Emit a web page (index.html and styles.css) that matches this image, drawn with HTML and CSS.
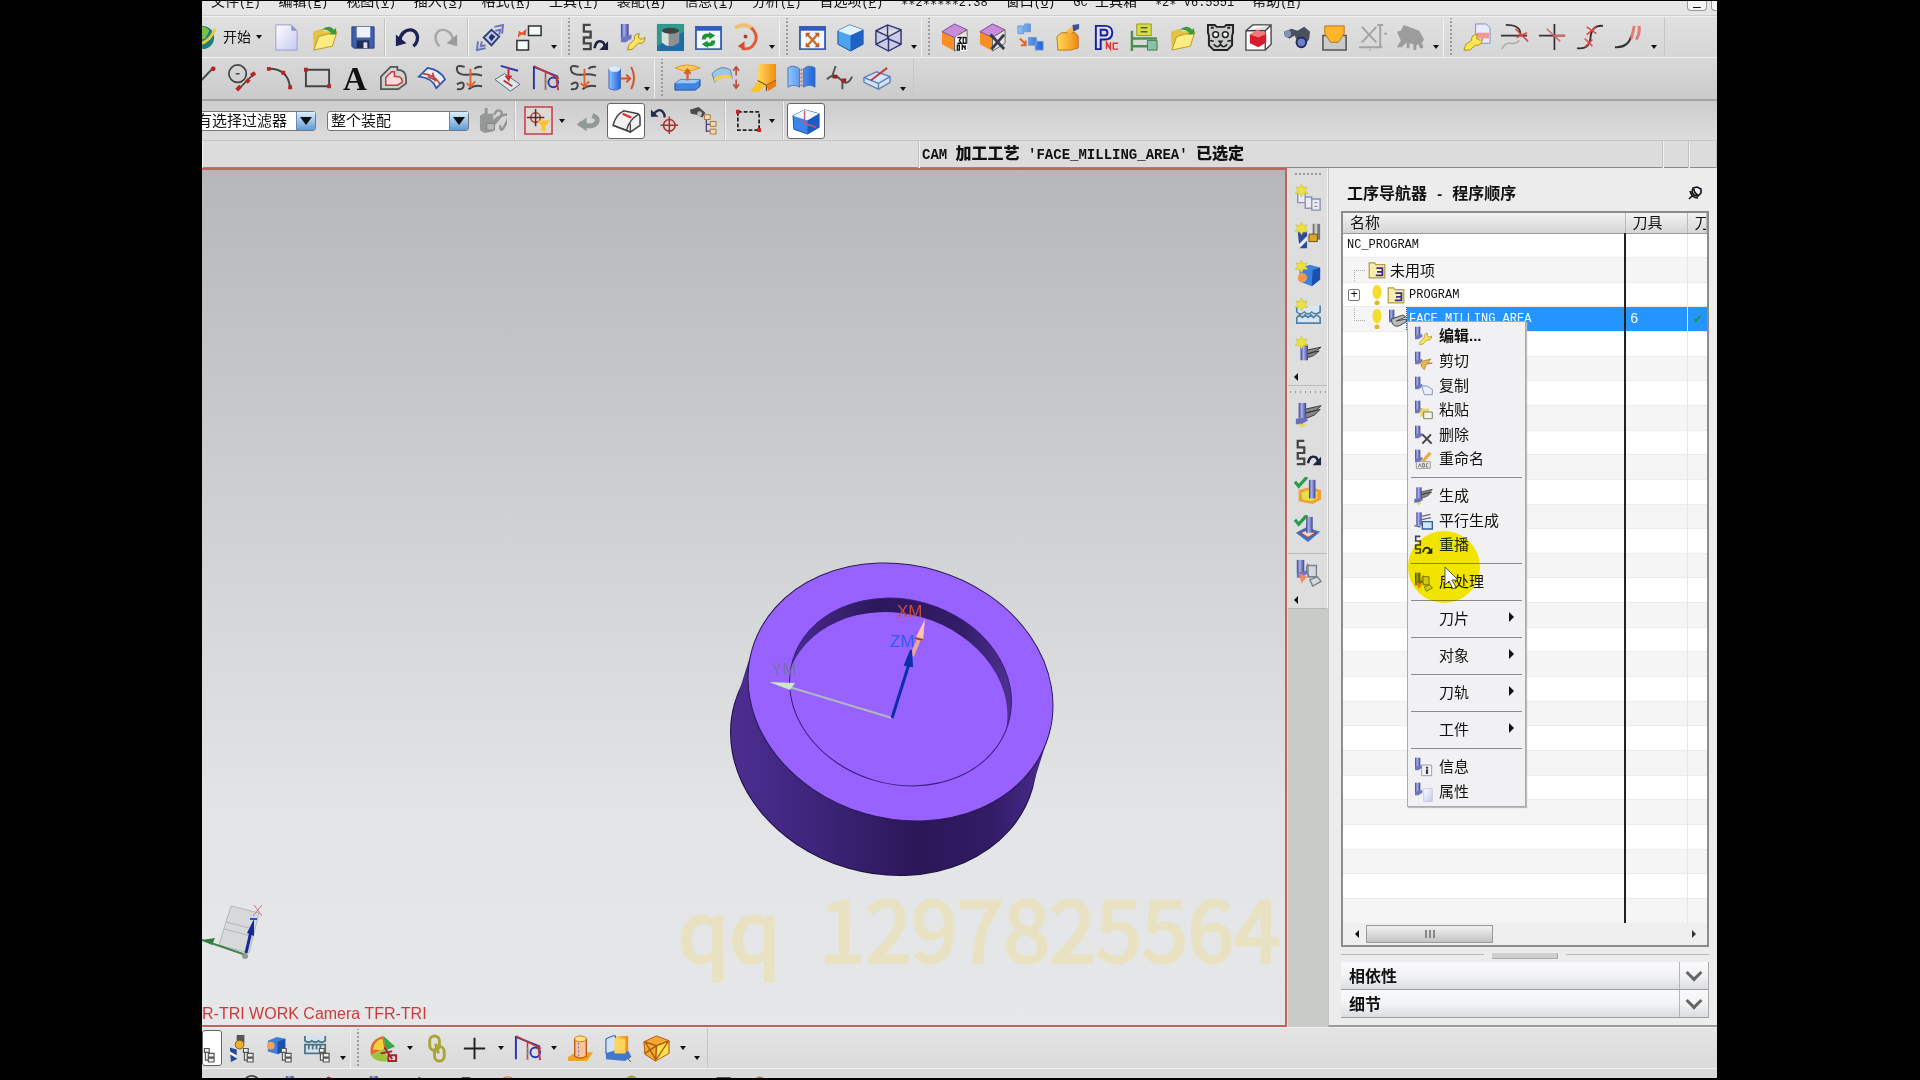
FILE: index.html
```
<!DOCTYPE html>
<html lang="zh-CN">

<head>
    <meta charset="utf-8">
    <title>工序导航器</title>
    <link rel="stylesheet" href="styles.css">
</head>

<body>
    <!-- 图标库 -->
    <svg class="defs" width="0" height="0" aria-hidden="true">
        <defs>
            <linearGradient id="gBlue" x1="0" x2="1"><stop offset="0" stop-color="#8fc4ff"/><stop offset="1" stop-color="#1f62d8"/></linearGradient>
            <linearGradient id="gMill" x1="0" x2="1"><stop offset="0" stop-color="#3a3f96"/><stop offset=".4" stop-color="#a9b0ee"/><stop offset="1" stop-color="#3d4293"/></linearGradient>
            <linearGradient id="gGold" x1="0" x2="1"><stop offset="0" stop-color="#ffd95a"/><stop offset="1" stop-color="#f08a12"/></linearGradient>
            <linearGradient id="gPaper" x1="0" y1="0" x2="1" y2="1"><stop offset="0" stop-color="#fff"/><stop offset="1" stop-color="#c5c8f0"/></linearGradient>
            <linearGradient id="gSide" gradientUnits="userSpaceOnUse" x1="31" x2="348" y1="0" y2="0"><stop offset="0" stop-color="#4c2e92"/><stop offset=".28" stop-color="#3d2479"/><stop offset=".6" stop-color="#2a1757"/><stop offset=".82" stop-color="#321c66"/><stop offset="1" stop-color="#4a2c90"/></linearGradient>
            <linearGradient id="gWall" x1="0" x2="1"><stop offset="0" stop-color="#4e2f97"/><stop offset=".4" stop-color="#2c185b"/><stop offset=".75" stop-color="#321d68"/><stop offset="1" stop-color="#553399"/></linearGradient>
        </defs>
        <symbol id="i-globe" viewBox="0 0 30 30"><circle cx="14" cy="15" r="12" fill="#1d7f7c"/><path d="M8 6q8-5 13 2l-4 8-9 2z" fill="#7cc04a"/><path d="M2 22Q20 24 27 6" fill="none" stroke="#f0c83c" stroke-width="3"/></symbol>
        <symbol id="i-new" viewBox="0 0 30 30"><path d="M4 2h16l6 6v20H4z" fill="url(#gPaper)" stroke="#9a9cd0"/><path d="M20 2v6h6z" fill="#8f93cc"/></symbol>
        <symbol id="i-open" viewBox="0 0 30 30"><path d="M3 9l9-3 3 3 9-2v17L4 28z" fill="#e4c340"/><path d="M4 28l5-14 19-5-5 15z" fill="#ffec84" stroke="#b99b28"/><path d="M12 7q8-6 13 0l2-2v7h-7l2-2q-4-4-10-3z" fill="#3c9a3c"/></symbol>
        <symbol id="i-save" viewBox="0 0 30 30"><path d="M4 4h23v22H6l-2-2z" fill="#3d5fae" stroke="#2c427f"/><path d="M9 4h14v11H9z" fill="#eef3fb"/><path d="M9 18h13v8H9z" fill="#222b50"/><path d="M16 20h4v6h-4z" fill="#dde"/></symbol>
        <symbol id="i-undo" viewBox="0 0 30 30"><path d="M7 18C9 3 28 4 25 18q-1 4-4 6" fill="none" stroke="#1d2155" stroke-width="3.5"/><path d="M3 12v12l11-3z" fill="#1d2155"/></symbol>
        <symbol id="i-redo" viewBox="0 0 30 30"><path d="M23 18C21 3 2 4 5 18q1 4 4 6" fill="none" stroke="#a9a9a9" stroke-width="2.5"/><path d="M27 12v12l-11-3z" fill="#9c9c9c"/></symbol>
        <symbol id="i-orient" viewBox="0 0 30 30"><path d="M8 15l8-8 8 7-8 9z" fill="#c3cdf5" stroke="#39407e" stroke-width="2"/><path d="M13 15l3-4 4 3-4 5z" fill="#29306b"/><path d="M19 4l9-2-1 9M20 8l5-1-1 5M2 19l-1 9 9-2M6 19l-1 5 5-1" fill="none" stroke="#6a74b8" stroke-width="2"/></symbol>
        <symbol id="i-assign" viewBox="0 0 30 30"><path d="M15 3h13v10H15zM3 18h12v10H3z" fill="#f2fafa" stroke="#333" stroke-width="1.6"/><path d="M4 15l1-7 3 2 5-4-1 7-4-1z" fill="#e0562c"/></symbol>
        <symbol id="i-replay" viewBox="0 0 30 30"><path d="M11 2H4v7h7v6H4M4 15v0M11 15H4v6h7v6H3" fill="none" stroke="#444" stroke-width="2.4"/><path d="M15 26q2-10 9-6l2 4" fill="none" stroke="#1d2340" stroke-width="2.6"/><path d="M29 19v9h-9z" fill="#1d2340"/></symbol>
        <symbol id="i-mill" viewBox="0 0 30 30"><path d="M3 1h8v14H3z" fill="url(#gMill)"/><path d="M3 15l11-3v4l-6 4H3z" fill="#6d75c4"/></symbol>
        <symbol id="i-edit" viewBox="0 0 30 30"><use href="#i-mill"/><path d="M10 28l1-5 6-6q-1-6 5-6l-1 4 3 2 4-2q0 7-7 6l-6 6z" fill="#ffe35a" stroke="#a68a22"/></symbol>
        <symbol id="i-verify" viewBox="0 0 30 30"><path d="M1 1h28v28H1z" fill="#1c6ea4"/><path d="M1 1h28v8L1 24z" fill="#2e9a8c"/><path d="M6 8v12q9 8 18 0V8z" fill="#8b9392"/><path d="M6 8v12q3 3 7 4V9z" fill="#dadfdc"/><ellipse cx="15" cy="8" rx="9" ry="3" fill="#3b4544"/></symbol>
        <symbol id="i-window" viewBox="0 0 30 30"><path d="M2 4h26v23H2z" fill="#f5f9ff" stroke="#3d62b5" stroke-width="2"/><path d="M2 4h26v4H2z" fill="#2e5cc0"/></symbol>
        <symbol id="i-refresh" viewBox="0 0 30 30"><use href="#i-window"/><path d="M8 17q0-7 8-6l-1-2 7 4-6 4v-2q-4-1-4 2zM22 18q0 7-8 6l1 2-7-4 6-4v2q4 1 4-2z" fill="#1d9436"/></symbol>
        <symbol id="i-fit" viewBox="0 0 30 30"><use href="#i-window"/><path d="M10 12l10 11M20 12L10 23" stroke="#c87236" stroke-width="2.5"/><path d="M8 10h5l-5 5zM22 10v5l-5-5zM8 25v-5l5 5zM22 25h-5l5-5z" fill="#c05a20"/></symbol>
        <symbol id="i-rotate" viewBox="0 0 30 30"><path d="M3 5q12-6 19 2" fill="none" stroke="#eec074" stroke-width="4"/><path d="M20 5q10 10 0 20-4 3-10 1" fill="none" stroke="#dc5a35" stroke-width="3"/><path d="M6 24l7-5v9z" fill="#d84a30"/><circle cx="14" cy="14" r="2" fill="#a8442a"/></symbol>
        <symbol id="i-shade" viewBox="0 0 30 30"><path d="M2 8l12-6 14 5v15l-13 7-13-7z" fill="#4ba3ee" stroke="#1c4c92"/><path d="M2 8l12-6 14 5-13 6z" fill="#dff2ff"/><path d="M15 13l13-6v15l-13 7z" fill="#1e62c4"/></symbol>
        <symbol id="i-wire" viewBox="0 0 30 30"><path d="M2 8l12-6 14 5v15l-13 7-13-7zM2 8l13 6 13-7M15 14v15M2 22l12-6 14 6M14 2v14" fill="#bcc3ef" fill-opacity=".6" stroke="#30366f" stroke-width="1.5"/></symbol>
        <symbol id="i-pcube" viewBox="0 0 30 30"><path d="M2 9l13 6v14L2 22z" fill="#f98f22"/><path d="M2 9l13-8 13 6-13 8z" fill="#c98cdd" stroke="#7d4a96"/><path d="M15 15l13-8v14l-13 8z" fill="#efe4dc" stroke="#666"/></symbol>
        <symbol id="i-cubelist" viewBox="0 0 30 30"><use href="#i-pcube"/><path d="M17 13h11v16H17z" fill="#fff"/><path d="M18 15h4l-2 3 2 3h-4M24 15h3v6h-3zM18 23h2v5h-2zM23 28v-5l3 3v-3 5" fill="none" stroke="#111" stroke-width="1.4"/></symbol>
        <symbol id="i-cubex" viewBox="0 0 30 30"><use href="#i-pcube"/><path d="M13 12l14 15M27 12L14 27" stroke="#333c55" stroke-width="3"/></symbol>
        <symbol id="i-copyobj" viewBox="0 0 30 30"><path d="M2 3h6v8H2zM9 1h6v8H9zM13 15h8v8h-8zM20 19h8v9h-8z" fill="url(#gBlue)" stroke="#6a9cca"/><path d="M4 16l6 6M10 18v5H5" fill="none" stroke="#e0662c" stroke-width="2"/></symbol>
        <symbol id="i-bottle" viewBox="0 0 30 30"><path d="M3 14l5-4h14l3 4v12l-8 2H4z" fill="url(#gGold)" stroke="#c0741a"/><path d="M12 9l6-5 3 4-4 3z" fill="#ffb94a"/><path d="M19 2l7-1v5l-6 3z" fill="#42508e"/></symbol>
        <symbol id="i-pnc" viewBox="0 0 30 30"><path d="M4 27V3h9q8 0 8 7t-8 7h-4v10zM9 7v6h4q3 0 3-3t-3-3z" fill="#dfe2f6" stroke="#16209a" stroke-width="2"/><path d="M15 27v-7l4 7v-7M27 21h-5v6h5" fill="none" stroke="#d33" stroke-width="1.5"/></symbol>
        <symbol id="i-steps" viewBox="0 0 30 30"><path d="M7 1h15v12H7z" fill="#d8df3a" stroke="#93982c"/><path d="M11 5h7M11 9h7" stroke="#555" stroke-width="1.5"/><path d="M2 8v21M2 16h26M2 24h26" stroke="#4d8f52" stroke-width="2.5"/><path d="M18 18h10v10H18z" fill="#8cc0a4" stroke="#3b8054"/></symbol>
        <symbol id="i-bear" viewBox="0 0 30 30"><path d="M2 2h7l2 2h8l2-2h7v8l-1 3v10l-5 5H8l-5-5V13l-1-3z" fill="#c9cbcb" stroke="#222" stroke-width="2"/><path d="M5 5h3M22 5h3" stroke="#222" stroke-width="2"/><circle cx="10" cy="12" r="3" fill="#fff" stroke="#222" stroke-width="1.6"/><circle cx="20" cy="12" r="3" fill="#fff" stroke="#222" stroke-width="1.6"/><path d="M12 18h6l-3 4z" fill="#222"/><path d="M8 22q4 5 7 0 3 5 7 0M4 18l4 1M26 18l-4 1" fill="none" stroke="#222" stroke-width="1.6"/></symbol>
        <symbol id="i-redcube" viewBox="0 0 30 30"><path d="M2 8l7-6h19v20l-6 6H2zM2 8h20l6-6M22 8v20" fill="#fff" stroke="#444" stroke-width="1.4"/><path d="M6 12l8-5 9 4v9l-8 5-9-4z" fill="#d81c2c"/><path d="M6 12l8-5 9 4-8 4z" fill="#f47a80"/></symbol>
        <symbol id="i-binoc" viewBox="0 0 30 30"><path d="M2 9l8-3 6 2 7-4 6 5-1 8-5 6-7-4-3-6-5 3-5-2z" fill="#4b4f5e"/><circle cx="6" cy="11" r="3.5" fill="#8791ba"/><circle cx="20" cy="20" r="5" fill="#6f7fd0" stroke="#252b57" stroke-width="2"/></symbol>
        <symbol id="i-mold" viewBox="0 0 30 30"><path d="M3 13h24v15H3z" fill="#c9cbca" stroke="#555" stroke-width="1.6"/><path d="M5 3h20v8l-6 9h-8l-6-9z" fill="#ffb52a" stroke="#b87212"/></symbol>
        <symbol id="i-dim" viewBox="0 0 30 30"><path d="M4 4l15 16M19 4L4 20M23 2v24M20 2h6M1 25h24M27 11h3M12 28h1" stroke="#a2a2a2" stroke-width="2"/></symbol>
        <symbol id="i-beast" viewBox="0 0 30 30"><path d="M1 9l4-1 3-6 16 6 5 9-3 5h2v4h-3l-2-4-2 1v5h-3v-6l-4-1v5h-3v-6l-5 5H1l4-7z" fill="#9c9c9c"/></symbol>
        <symbol id="i-docedit" viewBox="0 0 30 30"><path d="M14 1h11l4 4v16H14z" fill="#e7ebff" stroke="#7d8fd0"/><path d="M15 10h13v6H15z" fill="#f29a9a"/><path d="M2 28l2-6 6-4q-1-6 6-6l-1 4 4 2 2-2q0 8-7 7l-6 5z" fill="#ffe64c" stroke="#a69122"/></symbol>
        <symbol id="i-trim" viewBox="0 0 30 30"><path d="M6 2q16 0 15 10M1 13h27" fill="none" stroke="#333" stroke-width="1.8"/><path d="M2 27q3-7 9-6t9-3" fill="none" stroke="#aaa" stroke-width="1.5"/><path d="M16 6l13 13M28 10l-11 5" stroke="#d44" stroke-width="1.6"/></symbol>
        <symbol id="i-corner" viewBox="0 0 30 30"><path d="M1 13h27M17 1v27" stroke="#333" stroke-width="1.8"/><path d="M9 6l14 13M17 13h11" stroke="#d66" stroke-width="1.6"/></symbol>
        <symbol id="i-divide" viewBox="0 0 30 30"><path d="M1 26q13 2 14-11T28 3" fill="none" stroke="#333" stroke-width="2"/><path d="M11 4l10 7M21 4l-10 8M9 16l8 8M17 17l-8 8" stroke="#d44" stroke-width="1.5"/></symbol>
        <symbol id="i-length" viewBox="0 0 30 30"><path d="M1 25q14 1 17-12" fill="none" stroke="#333" stroke-width="2"/><path d="M18 16l3-13M23 17q4-6 3-14" stroke="#e07a74" stroke-width="3" fill="none"/></symbol>
        <symbol id="i-line" viewBox="0 0 30 30"><path d="M3 27L25 4" stroke="#444" stroke-width="2"/><circle cx="25" cy="5" r="2.5" fill="#b22"/></symbol>
        <symbol id="i-circline" viewBox="0 0 30 30"><circle cx="11" cy="10" r="9" fill="none" stroke="#444" stroke-width="1.8"/><path d="M9 10h4M12 26l15-15" stroke="#444" stroke-width="1.6"/><path d="M10 27l4-4M20 19l3-3M25 12l4-3" stroke="#b22" stroke-width="4"/></symbol>
        <symbol id="i-arc" viewBox="0 0 30 30"><path d="M3 5q20-1 23 19" fill="none" stroke="#444" stroke-width="2"/><path d="M2 3h4v4H2zM17 7h4v4h-4zM24 22h4v4h-4z" fill="#b22"/></symbol>
        <symbol id="i-rect" viewBox="0 0 30 30"><path d="M3 6h24v17H3z" fill="none" stroke="#444" stroke-width="2"/><path d="M1 4h4v4H1zM25 21h4v4h-4z" fill="#b22"/></symbol>
        <symbol id="i-offset" viewBox="0 0 30 30"><path d="M2 26V13L12 3h7v3q9 0 9 9v5l-8 6z" fill="none" stroke="#555" stroke-width="1.8"/><path d="M7 22v-8l6-6h3v5q7-1 8 4v2l-5 3z" fill="#f9dcdc" stroke="#b44" stroke-width="1.6"/></symbol>
        <symbol id="i-surf" viewBox="0 0 30 30"><path d="M2 13l9-9q13 2 18 12l-9 9Q16 14 2 13z" fill="#e9f1f7" stroke="#2d55b5" stroke-width="1.8"/><path d="M6 10q12 1 18 11M11 13l9 4M16 9l3 9" fill="none" stroke="#c0413a" stroke-width="1.8"/></symbol>
        <symbol id="i-curves" viewBox="0 0 30 30"><path d="M10 3q-9-3-8 3t13 5q6-1 13 1M2 21q7-4 7 1t-7 4M14 26q6-5 14-3M20 5q3-3 8-2" fill="none" stroke="#444" stroke-width="2"/><path d="M16 5v18l-4-3M16 23l5-5" stroke="#e0662c" stroke-width="2" fill="none"/></symbol>
        <symbol id="i-plane" viewBox="0 0 30 30"><path d="M2 16l10-6 16 11-10 7z" fill="#dcebea" stroke="#568"/><path d="M8 2l18 5" stroke="#2638b5" stroke-width="2"/><path d="M16 4v12l-3-4M16 16l3-4M11 17l9 6" stroke="#c03030" stroke-width="2" fill="none"/></symbol>
        <symbol id="i-derive" viewBox="0 0 30 30"><path d="M3 26V2M3 3l25 10" stroke="#2537b0" stroke-width="2"/><path d="M3 2l26 13M15 7v20" stroke="#c13a3a" stroke-width="1.6"/><path d="M15 14v14" stroke="#4aa3a0" stroke-width="1.5" stroke-dasharray="3 2"/><circle cx="23" cy="19" r="5" fill="none" stroke="#2537b0" stroke-width="2"/><path d="M26 12l2 15" stroke="#c13a3a" stroke-width="2"/></symbol>
        <symbol id="i-extr" viewBox="0 0 30 30"><path d="M2 5q6-5 12 0v20q-6 4-12 0z" fill="url(#gBlue)" stroke="#4a6ab8"/><ellipse cx="8" cy="5" rx="6" ry="3" fill="#dcecff"/><path d="M14 15h10M20 11l4 4-4 4M25 3q6 11 0 23" fill="none" stroke="#d8502c" stroke-width="2"/></symbol>
        <symbol id="i-pad" viewBox="0 0 30 30"><path d="M2 20l6-4h20v7l-5 4H2z" fill="#3f86e2" stroke="#1f50a0"/><path d="M2 20l6-4h20l-5 4z" fill="#9cc8f8"/><path d="M2 4q13-6 26 0-13 6-26 0z" fill="#ffca5a" stroke="#e0962a"/><path d="M15 7v10M12 10l3-4 3 4" stroke="#d2652c" stroke-width="2.5" fill="none"/></symbol>
        <symbol id="i-sweep" viewBox="0 0 30 30"><path d="M1 10q9-10 19-4l2 9q-11-5-18 4z" fill="#9cc7ea" stroke="#5b82a6"/><path d="M3 15q8-6 18-3l1 4q-11-4-18 3z" fill="#f4d23c"/><path d="M26 3v9M26 16v9M23 7l3-4 3 4M23 21l3 4 3-4" stroke="#b84a33" stroke-width="1.6" fill="none"/></symbol>
        <symbol id="i-chamfer" viewBox="0 0 30 30"><path d="M10 0h18v17l-10 5-9-4z" fill="url(#gGold)"/><path d="M9 18l9 4-8 7H1z" fill="#ffc32a"/><path d="M9 17l9 5 10-5M18 22v6" stroke="#5a3207" fill="none"/><path d="M18 22l10-5v6l-8 5z" fill="#ee7d14"/></symbol>
        <symbol id="i-sew" viewBox="0 0 30 30"><path d="M1 4q6-4 12 1v19q-6-4-12 0zM17 5q6-5 12-1v20q-6-4-12 0z" fill="url(#gBlue)" stroke="#4677b5"/><path d="M15 5v20" stroke="#d76a5a" stroke-width="2" stroke-dasharray="2 2"/></symbol>
        <symbol id="i-spline" viewBox="0 0 30 30"><path d="M2 16q7-8 14 0t12-3M7 14l4-12M18 17v9" fill="none" stroke="#555" stroke-width="2"/><path d="M8 11h5v4H8zM17 15h5v4h-5z" fill="#9c2222"/></symbol>
        <symbol id="i-slab" viewBox="0 0 30 30"><path d="M1 14l13-6 14 5v6l-12 7-15-7z" fill="#d5e3fb" stroke="#6482bc" stroke-width="1.5"/><path d="M1 14l15 6 12-7M16 20v6" fill="none" stroke="#6482bc" stroke-width="1.5"/><path d="M8 17L25 4" stroke="#c0413a" stroke-width="2"/></symbol>
        <symbol id="i-asm" viewBox="0 0 30 30"><path d="M2 10l5-3v-5h3v6h6v18l-9 2-5-3z" fill="#969896"/><path d="M9 18h8v7H9z" fill="#b8bab8" stroke="#7e807e"/><path d="M17 9q2-6 6-4t-2 9-4 4q-2-4 8-8t4 8-6 2" fill="none" stroke="#929492" stroke-width="2.5"/></symbol>
        <symbol id="i-snap" viewBox="0 0 30 30"><path d="M1 1h28v28H1z" fill="#dfd9d6" stroke="#c0424a" stroke-width="1.6"/><circle cx="12" cy="12" r="5" fill="none" stroke="#a8443c" stroke-width="1.6"/><path d="M12 3v18M3 12h18" stroke="#5a2d28" stroke-width="1.6"/><path d="M14 15h13l-5 6v6l-4-2v-4z" fill="#ffc22a"/></symbol>
        <symbol id="i-back" viewBox="0 0 30 30"><path d="M5 18q16 6 19-2 1-4-5-6" fill="none" stroke="#8f9b97" stroke-width="5"/><path d="M13 12v14L3 19z" fill="#8f9b97"/></symbol>
        <symbol id="i-eraser" viewBox="0 0 30 30"><path d="M1 20q3-11 11-15l15 3q2 1 2 4v8l-10 7z" fill="#f1f1f1" stroke="#444" stroke-width="1.6"/><path d="M1 20l14 5q3-11 12-16M15 25l4 2v-9" fill="none" stroke="#444" stroke-width="1.4"/><path d="M11 8l9 4" stroke="#d33" stroke-width="2.5"/></symbol>
        <symbol id="i-target" viewBox="0 0 30 30"><path d="M4 8q7-8 11 1v3" fill="none" stroke="#222850" stroke-width="2.4"/><path d="M1 4v7h8z" fill="#222850"/><circle cx="20" cy="20" r="6" fill="none" stroke="#a8332c" stroke-width="1.6"/><path d="M20 11v18M11 20h18" stroke="#a8332c" stroke-width="1.6"/></symbol>
        <symbol id="i-findtree" viewBox="0 0 30 30"><path d="M2 4l9-3 7 6-3 5-6-3-6-1z" fill="#4b4b4b"/><circle cx="12" cy="8" r="2.5" fill="#bbb"/><path d="M19 13v14M19 19h4M19 26h4" stroke="#547" stroke-width="1.4" fill="none"/><path d="M17 9h6v5h-6zM23 16h6v5h-6zM23 24h6v5h-6z" fill="#f5d9b4" stroke="#a5763b"/></symbol>
        <symbol id="i-marquee" viewBox="0 0 30 30"><path d="M4 6h22v19H4z" fill="none" stroke="#222" stroke-width="1.8" stroke-dasharray="4 2"/><path d="M2 4h4v4H2zM24 23h4v4h-4z" fill="#c22"/></symbol>
        <symbol id="i-bluebox" viewBox="0 0 30 30"><path d="M1 10l12-6 15 4v14l-12 7L2 24z" fill="#3b86e8" stroke="#1c4ea2"/><path d="M1 10l12-6 15 4-12 7z" fill="#eef7ff"/><path d="M16 15l12-7v14l-12 7z" fill="#1f5ac2"/><path d="M13 5v13l12 4" fill="none" stroke="#c25a7a" stroke-width="1.5"/></symbol>
        <symbol id="i-star" viewBox="0 0 30 30"><path d="M8 0l2 4 4-1-2 4 3 3-5 0-2 4-2-4-5 0 3-3-2-4 4 1z" fill="#ece23c" stroke="#c6b83a" stroke-width=".6"/></symbol>
        <symbol id="i-newprog" viewBox="0 0 30 30"><path d="M4 9h8v11H4zM12 14h7v12h-7zM19 16h9v12h-9z" fill="#e8ebf4" stroke="#8b93ad" stroke-width="1.5"/><path d="M22 20h3M22 24h3" stroke="#777"/><use href="#i-star"/></symbol>
        <symbol id="i-newtool" viewBox="0 0 30 30"><path d="M4 11h10v17H6z" fill="#2c4b9c"/><path d="M5 24l9-9v5l-8 8z" fill="#e8edfa"/><path d="M20 2h8v17h-8z" fill="#777"/><path d="M22 2h3v17h-3z" fill="#ccc"/><path d="M16 13h9v8h-9z" fill="#e0a42c" stroke="#6f5212"/><use href="#i-star"/></symbol>
        <symbol id="i-newgeo" viewBox="0 0 30 30"><path d="M6 9l11-4 11 3v13l-9 7-13-5z" fill="#3e80dd"/><path d="M20 11l8-3v13l-9 7z" fill="#1b50ae"/><circle cx="9" cy="19" r="5" fill="#f29a4c"/><use href="#i-star"/></symbol>
        <symbol id="i-newmeth" viewBox="0 0 30 30"><path d="M3 9v6q4 4 8 0 4 4 8 0 4 4 9 0V8M3 21l3-3 3 3 3-3 3 3 3-3 3 3 3-3 4 3v6H3z" fill="#d8e8f2" stroke="#5482a8" stroke-width="1.8"/><use href="#i-star"/></symbol>
        <symbol id="i-newop" viewBox="0 0 30 30"><path d="M14 15l15-3-5 4-12 4 15-4-6 5-12 4z" fill="#888" stroke="#333"/><path d="M7 9h8v17H7z" fill="url(#gMill)"/><use href="#i-star"/></symbol>
        <symbol id="i-gen" viewBox="0 0 30 30"><path d="M11 9l18-4-5 5-12 3 16-4-6 6-10 4z" fill="#888" stroke="#333"/><path d="M5 2h8v17H5z" fill="url(#gMill)"/><path d="M2 19l11-1 2 3-7 4H2z" fill="#6a70b8"/><path d="M5 24l3 5 5-4" fill="#e6d84a"/></symbol>
        <symbol id="i-tick" viewBox="0 0 30 30"><path d="M1 5l4 5L14 0" fill="none" stroke="#2b9c4c" stroke-width="3.5"/></symbol>
        <symbol id="i-check" viewBox="0 0 30 30"><path d="M5 14l12-3 12 3v10l-9 5-15-3z" fill="#f2a034"/><path d="M8 17l9-4 8 3v7l-6 3-10-2z" fill="#e8e04a"/><path d="M16 3h7v20h-7z" fill="url(#gMill)"/><use href="#i-tick"/></symbol>
        <symbol id="i-confirm" viewBox="0 0 30 30"><path d="M2 19l11-6 15 5-13 11z" fill="#4270c6"/><path d="M7 19l7-3 9 3-8 5z" fill="#ecd3cc" stroke="#a33"/><path d="M13 2h7v17h-7z" fill="url(#gMill)"/><use href="#i-tick"/></symbol>
        <symbol id="i-post" viewBox="0 0 30 30"><use href="#i-mill"/><path d="M5 15l9 4-6 7z" fill="#ef8a5a"/><path d="M15 7h9v12h-9zM17 22l8-3 4 5-9 5z" fill="#d5d8df" stroke="#7c808a" stroke-width="1.5"/><path d="M15 5q-4 7 2 15" fill="none" stroke="#7c808a" stroke-width="1.5"/></symbol>
        <symbol id="i-tree" viewBox="0 0 30 30"><path d="M17 15h5v4h-5zM21 20h6v4h-6zM21 25h6v4h-6zM18 19v8h3" fill="#eee" stroke="#555" stroke-width="1.2"/></symbol>
        <symbol id="i-vprog" viewBox="0 0 30 30"><path d="M3 5h9v8H3z" fill="#f2f4fc" stroke="#888"/><use href="#i-tree"/></symbol>
        <symbol id="i-vtool" viewBox="0 0 30 30"><path d="M10 1h8v8h-8z" fill="#555"/><circle cx="13" cy="11" r="4.5" fill="#eeb02c" stroke="#7b5a14"/><path d="M3 14l7 2v10l-6 3z" fill="#2a469a"/><path d="M3 18l7 4v3l-7-4z" fill="#fff"/><use href="#i-tree"/></symbol>
        <symbol id="i-vgeo" viewBox="0 0 30 30"><path d="M3 7l9-4 9 2v12l-8 4-10-3z" fill="#3f7edb"/><path d="M13 8l8-3v12l-8 4z" fill="#1d50ae"/><circle cx="6" cy="12" r="4" fill="#f2a25a"/><use href="#i-tree"/></symbol>
        <symbol id="i-vmeth" viewBox="0 0 30 30"><path d="M2 2v5q4 3 7 0 4 3 7 0 3 3 7 0V2M2 11h21v9H2zM6 11v5M10 11v5M14 11v5M18 11v5" fill="#d4e4ec" stroke="#4b7288" stroke-width="1.8"/><use href="#i-tree"/></symbol>
        <symbol id="i-fan" viewBox="0 0 30 30"><path d="M2 22Q-1 6 15 2l2 12z" fill="#e4682c"/><path d="M4 16Q6 6 14 5l2 12z" fill="#f4d23c"/><path d="M15 2l12 11-10 4z" fill="#3fa648"/><path d="M2 22l14-7 4 13q-13 2-18-6z" fill="#9bc43c"/><path d="M16 14l8 12M12 20l12-2M20 22h8v6h-8z" fill="none" stroke="#a8232c" stroke-width="2"/></symbol>
        <symbol id="i-chain" viewBox="0 0 30 30"><g fill="none" stroke="#a9a536" stroke-width="3"><rect x="8" y="2" width="10" height="15" rx="5"/><rect x="13" y="13" width="10" height="15" rx="5"/><path d="M14 10l3 10"/></g></symbol>
        <symbol id="i-cross" viewBox="0 0 30 30"><path d="M15 4v22M4 15h22" stroke="#222" stroke-width="2"/></symbol>
        <symbol id="i-boss" viewBox="0 0 30 30"><path d="M2 24l8-5h18l-6 9H2z" fill="#f2a422"/><path d="M9 5q6-5 12 0v18q-6 4-12 0z" fill="#f7c49c" stroke="#c05c22" stroke-width="1.5"/><ellipse cx="15" cy="5" rx="6" ry="3" fill="#ffe28a" stroke="#d0791c"/><path d="M13 9v15" stroke="#76b" stroke-dasharray="2 2"/></symbol>
        <symbol id="i-block" viewBox="0 0 30 30"><path d="M2 5l7-3h3v18H2z" fill="#cfe2fa" stroke="#254d90"/><path d="M2 20l9-3h14l3 6-6 5-20-2z" fill="#3f78cc"/><path d="M11 5l3-3h11v14l-3 4H11z" fill="url(#gGold)"/><path d="M11 5h11v15H11z" fill="#ffd35a"/><path d="M28 23l-3 3 3 3" fill="none" stroke="#444"/></symbol>
        <symbol id="i-gem" viewBox="0 0 30 30"><path d="M2 8l13-6 13 5v13l-14 8L3 21z" fill="#f6a832" stroke="#a85a12"/><path d="M16 13l11-5v12l-12 7z" fill="#ffe24a"/><path d="M2 8l13 4 13-5M15 12l-1 16M3 20l12-8M3 8l11 18M27 8L15 26" fill="none" stroke="#a85a12" stroke-width="1.4"/></symbol>
        <symbol id="i-folder" viewBox="0 0 30 30"><path d="M2 6V3h9l2 3h15v22H2z" fill="#f8edb0" stroke="#b49a3a" stroke-width="2"/><path d="M14 12h10v12H13M15 18h9" fill="none" stroke="#35308c" stroke-width="3"/></symbol>
        <symbol id="i-facemill" viewBox="0 0 30 30"><use href="#i-mill"/><path d="M7 15l17-6 4 3-14 6 15-3v4l-10 6q-10 3-12-6z" fill="#bbb" stroke="#444" stroke-width="1.5"/></symbol>
        <symbol id="i-cut" viewBox="0 0 30 30"><use href="#i-mill"/><path d="M11 16l16-4-5 6h7l-9 2-3 8-4-4z" fill="#e8b84c" stroke="#99732a"/></symbol>
        <symbol id="i-copy" viewBox="0 0 30 30"><use href="#i-mill"/><path d="M13 15h8l8 5v8H17z" fill="#edf0fc" stroke="#8d93bd" stroke-width="1.5"/></symbol>
        <symbol id="i-paste" viewBox="0 0 30 30"><use href="#i-mill"/><path d="M11 13h13v12H11z" fill="#e7d75c"/><path d="M16 18h13v10H16z" fill="#f3f2e4" stroke="#7f8272" stroke-width="1.5"/></symbol>
        <symbol id="i-del" viewBox="0 0 30 30"><use href="#i-mill"/><path d="M14 14l14 14M27 14L14 28" stroke="#444" stroke-width="3"/></symbol>
        <symbol id="i-rename" viewBox="0 0 30 30"><use href="#i-mill"/><path d="M13 17L24 4l4 3-11 12z" fill="#f2a83a"/><path d="M5 19h21v10H5z" fill="#eee" stroke="#777"/><path d="M8 27l2-5 2 5M14 22v5h3v-5zM23 22h-3v5h3" fill="none" stroke="#444"/></symbol>
        <symbol id="i-par" viewBox="0 0 30 30"><path d="M5 2h8v20H5z" fill="url(#gMill)"/><path d="M13 8l13-3M13 13l14-3M2 22l9 2" stroke="#667" stroke-width="2"/><path d="M14 16h15v11H14z" fill="#cfe6f5" stroke="#34618c" stroke-width="2"/></symbol>
        <symbol id="i-info" viewBox="0 0 30 30"><use href="#i-mill"/><path d="M13 12h15v16H13z" fill="#f2f2fa" stroke="#778"/><path d="M20 15h2v2h-2zM20 19h2v6h-2z" stroke="#222"/></symbol>
        <symbol id="i-prop" viewBox="0 0 30 30"><use href="#i-mill"/><path d="M16 10h13v19H16z" fill="url(#gPaper)" stroke="#b9bcdc"/></symbol>
    </svg>

    <div class="app">
        <nav class="menubar">
            <a href="#">文件<span>(<u>F</u>)</span></a>
            <a href="#">编辑<span>(<u>E</u>)</span></a>
            <a href="#">视图<span>(<u>V</u>)</span></a>
            <a href="#">插入<span>(<u>S</u>)</span></a>
            <a href="#">格式<span>(<u>R</u>)</span></a>
            <a href="#">工具<span>(<u>T</u>)</span></a>
            <a href="#">装配<span>(<u>A</u>)</span></a>
            <a href="#">信息<span>(<u>I</u>)</span></a>
            <a href="#">分析<span>(<u>L</u>)</span></a>
            <a href="#">首选项<span>(<u>P</u>)</span></a>
            <a href="#"><span>∗∗2∗∗∗∗∗2.38</span></a>
            <a href="#">窗口<span>(<u>O</u>)</span></a>
            <a href="#"><span>GC </span>工具箱</a>
            <a href="#"><span>∗2∗ V6.5551</span></a>
            <a href="#">帮助<span>(<u>H</u>)</span></a>
            <div class="winbtns">
                <button title="最小化">–</button>
                <button title="还原">▫</button>
            </div>
        </nav>

        <div class="bar standard">
            <button class="start"><svg><use href="#i-globe"/></svg>开始<i class="caret"></i></button>
            <button class="tool" title="新建"><svg><use href="#i-new"/></svg></button>
            <button class="tool" title="打开"><svg><use href="#i-open"/></svg></button>
            <button class="tool" title="保存"><svg><use href="#i-save"/></svg></button>
            <span class="sep"></span>
            <button class="tool" title="撤消"><svg><use href="#i-undo"/></svg></button>
            <button class="tool" title="重做"><svg><use href="#i-redo"/></svg></button>
            <span class="sep"></span>
            <button class="tool" title="定向"><svg><use href="#i-orient"/></svg></button>
            <button class="tool" title="指派"><svg><use href="#i-assign"/></svg></button>
            <button class="more" title="更多"></button><span class="grip"></span>
            <button class="tool" title="重播刀轨"><svg><use href="#i-replay"/></svg></button>
            <button class="tool" title="编辑工序"><svg><use href="#i-edit"/></svg></button>
            <button class="tool" title="确认刀轨"><svg><use href="#i-verify"/></svg></button>
            <button class="tool" title="刷新"><svg><use href="#i-refresh"/></svg></button>
            <button class="tool" title="旋转"><svg><use href="#i-rotate"/></svg></button>
            <button class="more" title="更多"></button><span class="grip"></span>
            <button class="tool" title="适合窗口"><svg><use href="#i-fit"/></svg></button>
            <button class="tool" title="着色"><svg><use href="#i-shade"/></svg></button>
            <button class="tool" title="线框"><svg><use href="#i-wire"/></svg></button>
            <button class="more" title="更多"></button><span class="grip"></span>
            <button class="tool" title="对象列表"><svg><use href="#i-cubelist"/></svg></button>
            <button class="tool" title="删除对象"><svg><use href="#i-cubex"/></svg></button>
            <button class="tool" title="复制对象"><svg><use href="#i-copyobj"/></svg></button>
            <button class="tool" title="清理"><svg><use href="#i-bottle"/></svg></button>
            <button class="tool" title="后处理"><svg><use href="#i-pnc"/></svg></button>
            <button class="tool" title="步骤"><svg><use href="#i-steps"/></svg></button>
            <button class="tool" title="打开目录"><svg><use href="#i-open"/></svg></button>
            <button class="tool" title="外挂"><svg><use href="#i-bear"/></svg></button>
            <button class="tool" title="包容块"><svg><use href="#i-redcube"/></svg></button>
            <button class="tool" title="查找"><svg><use href="#i-binoc"/></svg></button>
            <button class="tool" title="模具"><svg><use href="#i-mold"/></svg></button>
            <button class="tool" title="尺寸" disabled><svg><use href="#i-dim"/></svg></button>
            <button class="tool" title="电极" disabled><svg><use href="#i-beast"/></svg></button>
            <button class="more" title="更多"></button><span class="grip"></span>
            <button class="tool" title="编辑参数"><svg><use href="#i-docedit"/></svg></button>
            <button class="tool" title="修剪曲线"><svg><use href="#i-trim"/></svg></button>
            <button class="tool" title="修剪拐角"><svg><use href="#i-corner"/></svg></button>
            <button class="tool" title="分割曲线"><svg><use href="#i-divide"/></svg></button>
            <button class="tool" title="曲线长度"><svg><use href="#i-length"/></svg></button>
            <button class="more" title="更多"></button><span class="end"></span>
        </div>

        <div class="bar curves">
            <button class="tool cut" title="直线"><svg><use href="#i-line"/></svg></button>
            <button class="tool" title="直线和圆弧"><svg><use href="#i-circline"/></svg></button>
            <button class="tool" title="圆弧"><svg><use href="#i-arc"/></svg></button>
            <button class="tool" title="矩形"><svg><use href="#i-rect"/></svg></button>
            <button class="tool letter" title="文本">A</button>
            <button class="tool" title="偏置曲线"><svg><use href="#i-offset"/></svg></button>
            <button class="tool" title="面上偏置"><svg><use href="#i-surf"/></svg></button>
            <button class="tool" title="桥接曲线"><svg><use href="#i-curves"/></svg></button>
            <button class="tool" title="投影曲线"><svg><use href="#i-plane"/></svg></button>
            <button class="tool" title="派生曲线"><svg><use href="#i-derive"/></svg></button>
            <button class="tool" title="组合投影"><svg><use href="#i-curves"/></svg></button>
            <button class="tool" title="抽取曲线"><svg><use href="#i-extr"/></svg></button>
            <button class="more" title="更多"></button><span class="grip"></span>
            <button class="tool" title="拉伸"><svg><use href="#i-pad"/></svg></button>
            <button class="tool" title="扫掠"><svg><use href="#i-sweep"/></svg></button>
            <button class="tool" title="倒斜角"><svg><use href="#i-chamfer"/></svg></button>
            <button class="tool" title="缝合"><svg><use href="#i-sew"/></svg></button>
            <button class="tool" title="样条"><svg><use href="#i-spline"/></svg></button>
            <button class="tool" title="修剪片体"><svg><use href="#i-slab"/></svg></button>
            <button class="more" title="更多"></button><span class="end"></span>
        </div>

        <div class="bar selection">
            <div class="combo filter">
                <select aria-label="选择过滤器"><option>没有选择过滤器</option></select>
                <span></span>
            </div>
            <div class="combo scope">
                <select aria-label="选择范围"><option>整个装配</option></select>
                <span></span>
            </div>
            <button class="tool" title="装配约束" disabled><svg><use href="#i-asm"/></svg></button>
            <span class="sep"></span>
            <button class="tool" title="捕捉点"><svg><use href="#i-snap"/></svg></button>
            <button class="drop" title="捕捉选项"></button>
            <button class="tool" title="后退" disabled><svg><use href="#i-back"/></svg></button>
            <button class="tool on" title="取消选择"><svg><use href="#i-eraser"/></svg></button>
            <button class="tool" title="恢复"><svg><use href="#i-target"/></svg></button>
            <button class="tool" title="在导航器中查找"><svg><use href="#i-findtree"/></svg></button>
            <span class="sep"></span>
            <button class="tool" title="矩形选择"><svg><use href="#i-marquee"/></svg></button>
            <button class="drop" title="选择方式"></button>
            <span class="sep"></span>
            <button class="tool on" title="高亮显示"><svg><use href="#i-bluebox"/></svg></button>
        </div>

        <div class="status">
            <p></p>
            <p class="message">CAM <b>加工工艺</b> 'FACE_MILLING_AREA' <b>已选定</b></p>
            <p></p>
            <p></p>
        </div>

        <main>
            <section class="viewport">
                <svg class="part" viewBox="0 0 400 350">
                    <ellipse cx="183.5" cy="206" rx="154.4" ry="126.7" transform="rotate(16 183.5 206)" fill="#2a1757" stroke="#1d1040" stroke-width="2"/>
                    <clipPath id="base"><ellipse cx="183.5" cy="206" rx="154.4" ry="126.7" transform="rotate(16 183.5 206)"/><path d="M53 107L36 161L331 251L348 197z"/></clipPath>
                    <path d="M20 20h340v320H20z" fill="url(#gSide)" clip-path="url(#base)"/>
                    <ellipse cx="200.5" cy="152" rx="154.4" ry="126.7" transform="rotate(16 200.5 152)" fill="#9762ff" stroke="#2a1a55"/>
                    <clipPath id="pocket"><ellipse cx="200.5" cy="152" rx="112.4" ry="92.2" transform="rotate(16 200.5 152)"/></clipPath>
                    <g clip-path="url(#pocket)">
                        <path d="M80 50h240v210H80z" fill="url(#gWall)"/>
                        <ellipse cx="196.5" cy="166" rx="112.4" ry="92.2" transform="rotate(16 196.5 166)" fill="#9762ff"/>
                    </g>
                    <ellipse cx="200.5" cy="152" rx="112.4" ry="92.2" transform="rotate(16 200.5 152)" fill="none" stroke="#3a2078"/>
                    <path d="M192 178L86 146" stroke="#aeb6c4" stroke-width="2"/>
                    <path d="M69 142l26 1-5 7z" fill="#c9e8c4"/>
                    <path d="M212 116l9-22" stroke="#e9a79c" stroke-width="4"/>
                    <path d="M225 79l-10 20 8 2z" fill="#ffc3b0"/>
                    <path d="M215 98l8 2" stroke="#8a4a3a" stroke-width="2"/>
                    <path d="M192 178l17-54" stroke="#0b2fa8" stroke-width="3"/>
                    <path d="M211 110l-6 15 7 1z" fill="#0b2fa8" stroke="#0b2fa8" stroke-width="2"/>
                    <text x="197" y="77" fill="#c84a42">XM</text>
                    <text x="190" y="107" fill="#2f5cf0">ZM</text>
                    <text x="71" y="135" fill="#7a6fae">YM</text>
                </svg>
                <div class="watermark">qq <span>1297825564</span></div>
                <svg class="triad" viewBox="0 0 64 60">
                    <path d="M29 5l28 7-10 40-30-8z" fill="#d6d8da" stroke="#b4b6b8"/>
                    <path d="M24 21l27 7M22 28l27 7" stroke="#b4b6b8"/>
                    <path d="M44 54L0 39" stroke="#3f8449" stroke-width="2"/>
                    <path d="M0 39l13-2-3 7z" fill="#2f7c3c"/>
                    <path d="M44 52l6-26" stroke="#14299c" stroke-width="3"/>
                    <path d="M52 18l-7 14 7 3z" fill="#14299c"/>
                    <circle cx="43" cy="55" r="3" fill="#8f9a90"/>
                    <path d="M48 18h7" stroke="#2c4fe0" stroke-width="2"/>
                    <path d="M52 4l8 11M60 4l-9 11" stroke="#d0708a"/>
                </svg>
                <p class="viewname">R-TRI WORK Camera TFR-TRI</p>
            </section>

            <div class="sidebar">
                <div class="sidetools">
                    <span class="hgrip"></span>
                    <button class="tool" title="创建程序"><svg><use href="#i-newprog"/></svg></button>
                    <button class="tool" title="创建刀具"><svg><use href="#i-newtool"/></svg></button>
                    <button class="tool" title="创建几何体"><svg><use href="#i-newgeo"/></svg></button>
                    <button class="tool" title="创建方法"><svg><use href="#i-newmeth"/></svg></button>
                    <button class="tool" title="创建工序"><svg><use href="#i-newop"/></svg></button>
                    <button class="less" title="更多"></button>
                    <span class="hgrip second"></span>
                    <button class="tool" title="生成刀轨"><svg><use href="#i-gen"/></svg></button>
                    <button class="tool" title="重播刀轨"><svg><use href="#i-replay"/></svg></button>
                    <button class="tool" title="校验刀轨"><svg><use href="#i-check"/></svg></button>
                    <button class="tool" title="确认刀轨"><svg><use href="#i-confirm"/></svg></button>
                    <span class="hsep"></span>
                    <button class="tool" title="后处理"><svg><use href="#i-post"/></svg></button>
                    <button class="less" title="更多"></button>
                </div>
            </div>

            <aside class="navigator">
                <header>
                    <h2>工序导航器<i> - </i>程序顺序</h2>
                    <button title="固定"><svg viewBox="0 0 14 14"><path d="M5 2l4-1 4 2v4l-3 3-4-1-2-3z" fill="#eef" stroke="#111" stroke-width="1.6"/><path d="M2 5q2 7 8 7M1 13l4-4M6 3q0 4 4 6" fill="none" stroke="#111" stroke-width="1.6"/></svg></button>
                </header>

                <div class="tree">
                    <div class="rows">
                        <table>
                            <colgroup><col class="c-name"><col class="c-tool"><col></colgroup>
                            <thead><tr><th>名称</th><th>刀具</th><th>刀</th></tr></thead>
                            <tbody>
                                <tr><td><div class="node root">NC_PROGRAM</div></td><td></td><td></td></tr>
                                <tr><td><div class="node first"><svg><use href="#i-folder"/></svg><b>未用项</b></div></td><td></td><td></td></tr>
                                <tr><td><div class="node second"><button class="plus" title="展开">+</button><i class="alert"></i><svg><use href="#i-folder"/></svg>PROGRAM</div></td><td></td><td></td></tr>
                                <tr class="selected"><td><div class="node third"><i class="alert"></i><svg><use href="#i-facemill"/></svg><span>FACE_MILLING_AREA</span></div></td><td>6</td><td>✔</td></tr>
                                <tr><td></td><td></td><td></td></tr>
                                <tr><td></td><td></td><td></td></tr>
                                <tr><td></td><td></td><td></td></tr>
                                <tr><td></td><td></td><td></td></tr>
                                <tr><td></td><td></td><td></td></tr>
                                <tr><td></td><td></td><td></td></tr>
                                <tr><td></td><td></td><td></td></tr>
                                <tr><td></td><td></td><td></td></tr>
                                <tr><td></td><td></td><td></td></tr>
                                <tr><td></td><td></td><td></td></tr>
                                <tr><td></td><td></td><td></td></tr>
                                <tr><td></td><td></td><td></td></tr>
                                <tr><td></td><td></td><td></td></tr>
                                <tr><td></td><td></td><td></td></tr>
                                <tr><td></td><td></td><td></td></tr>
                                <tr><td></td><td></td><td></td></tr>
                                <tr><td></td><td></td><td></td></tr>
                                <tr><td></td><td></td><td></td></tr>
                                <tr><td></td><td></td><td></td></tr>
                                <tr><td></td><td></td><td></td></tr>
                                <tr><td></td><td></td><td></td></tr>
                                <tr><td></td><td></td><td></td></tr>
                                <tr><td></td><td></td><td></td></tr>
                                <tr><td></td><td></td><td></td></tr>
                            </tbody>
                        </table>
                    </div>
                    <div class="scroll">
                        <button class="left" title="向左"></button>
                        <div class="thumb"><i></i><i></i><i></i></div>
                        <button class="right" title="向右"></button>
                    </div>
                </div>
                <div class="splitter"><span></span></div>
                <button class="fold">相依性<i></i></button>
                <button class="fold">细节<i></i></button>

                <div class="spot"></div>
                <ul class="context">
                    <li><button class="default"><svg><use href="#i-edit"/></svg>编辑...</button></li>
                    <li><button><svg><use href="#i-cut"/></svg>剪切</button></li>
                    <li><button><svg><use href="#i-copy"/></svg>复制</button></li>
                    <li><button><svg><use href="#i-paste"/></svg>粘贴</button></li>
                    <li><button><svg><use href="#i-del"/></svg>删除</button></li>
                    <li><button><svg><use href="#i-rename"/></svg>重命名</button></li>
                    <li class="line"></li>
                    <li><button><svg><use href="#i-gen"/></svg>生成</button></li>
                    <li><button><svg><use href="#i-par"/></svg>平行生成</button></li>
                    <li><button class="hot"><svg><use href="#i-replay"/></svg>重播</button></li>
                    <li class="line"></li>
                    <li><button><svg><use href="#i-post"/></svg>后处理</button></li>
                    <li class="line"></li>
                    <li><button class="sub">刀片</button></li>
                    <li class="line"></li>
                    <li><button class="sub">对象</button></li>
                    <li class="line"></li>
                    <li><button class="sub">刀轨</button></li>
                    <li class="line"></li>
                    <li><button class="sub">工件</button></li>
                    <li class="line"></li>
                    <li><button><svg><use href="#i-info"/></svg>信息</button></li>
                    <li><button><svg><use href="#i-prop"/></svg>属性</button></li>
                </ul>
                <svg class="cursor" viewBox="0 0 16 24"><path d="M1 1v18l4-4 4 8 3-2-4-7h6z" fill="#fff" stroke="#555"/></svg>
            </aside>
        </main>

        <div class="bar views">
            <button class="tool on cut" title="程序顺序视图"><svg><use href="#i-vprog"/></svg></button>
            <button class="tool" title="机床视图"><svg><use href="#i-vtool"/></svg></button>
            <button class="tool" title="几何视图"><svg><use href="#i-vgeo"/></svg></button>
            <button class="tool" title="加工方法视图"><svg><use href="#i-vmeth"/></svg></button>
            <button class="more" title="更多"></button><span class="grip"></span>
            <button class="tool" title="分析"><svg><use href="#i-fan"/></svg></button>
            <button class="drop" title="分析选项"></button>
            <button class="tool" title="链接"><svg><use href="#i-chain"/></svg></button>
            <button class="tool" title="点"><svg><use href="#i-cross"/></svg></button>
            <button class="drop" title="点选项"></button>
            <button class="tool" title="曲线"><svg><use href="#i-derive"/></svg></button>
            <button class="drop" title="曲线选项"></button>
            <button class="tool" title="凸台"><svg><use href="#i-boss"/></svg></button>
            <button class="tool" title="块"><svg><use href="#i-block"/></svg></button>
            <button class="tool" title="偏置面"><svg><use href="#i-gem"/></svg></button>
            <button class="drop" title="偏置选项"></button>
            <button class="more" title="更多"></button><span class="end"></span>
        </div>

        <div class="bar extra">
            <button class="tool" title="圆"><svg><use href="#i-circline"/></svg></button>
            <button class="tool" title="钻"><svg><use href="#i-mill"/></svg></button>
            <button class="tool" title="草图"><svg><use href="#i-derive"/></svg></button>
            <button class="tool" title="删除"><svg><use href="#i-del"/></svg></button>
            <button class="tool" title="样条"><svg><use href="#i-spline"/></svg></button>
            <button class="tool" title="偏置曲线"><svg><use href="#i-offset"/></svg></button>
            <button class="tool" title="凸台"><svg><use href="#i-boss"/></svg></button>
            <button class="tool" title="撤消"><svg><use href="#i-undo"/></svg></button>
            <button class="tool" title="打开"><svg><use href="#i-open"/></svg></button>
            <button class="tool" title="链接"><svg><use href="#i-chain"/></svg></button>
            <button class="tool" title="返回"><svg><use href="#i-undo"/></svg></button>
            <button class="tool" title="复制"><svg><use href="#i-assign"/></svg></button>
            <button class="tool" title="偏置面"><svg><use href="#i-gem"/></svg></button>
        </div>
    </div>
</body>

</html>
```
FILE: styles.css
```
* {
    box-sizing: border-box;
}

html,
body {
    height: 100%;
    overflow: hidden;
}

body,
h2,
p,
ul {
    margin: 0;
    padding: 0;
}

body {
    background: #000;
    color: #111;
    font: 15px/20px "Liberation Sans", "Noto Sans CJK SC", sans-serif;
}

button {
    margin: 0;
    padding: 0;
    border: 0;
    background: none;
    color: inherit;
    font: inherit;
}

a {
    color: inherit;
    text-decoration: none;
}

.defs {
    position: absolute;
}

.app {
    display: flex;
    flex-direction: column;
    height: calc(100vh - 3px);
    margin: 1px 203px 2px 202px;
    overflow: hidden;
    background: #dcdcdc;
}

/* 菜单栏 */
.menubar {
    display: flex;
    flex: none;
    gap: 18px;
    height: 15px;
    padding-left: 9px;
    overflow: hidden;
    background: #e6e6e6;
    border-bottom: 1px solid #cfcfcf;
    font-size: 14px;
    line-height: 16px;
    white-space: pre;
}

.menubar a {
    margin-top: -8px;
}

.menubar span {
    font-family: "Liberation Mono", "DejaVu Sans Mono", monospace;
    font-size: 12px;
}

.winbtns {
    display: flex;
    gap: 4px;
    margin-left: auto;
    margin-right: -14px;
}

.winbtns button {
    width: 20px;
    height: 10px;
    border: 1px solid #999;
    border-top: 0;
    border-radius: 0 0 4px 4px;
    background: #f4f4f4;
    line-height: 6px;
}

/* 工具条 */
.bar {
    display: flex;
    flex: none;
    align-items: center;
    height: 41px;
    background: linear-gradient(#e0e0e0, #d6d6d6);
    border-top: 1px solid #f0f0f0;
    overflow: hidden;
}

.bar > * {
    flex: none;
}

.tool {
    display: flex;
    align-items: center;
    justify-content: center;
    width: 38px;
    height: 36px;
}

.tool svg {
    width: 29px;
    height: 29px;
}

.start {
    display: flex;
    align-items: center;
    gap: 5px;
    width: 65px;
    font-size: 14px;
    white-space: nowrap;
}

.start svg {
    width: 29px;
    height: 29px;
    margin-left: -13px;
    flex: none;
}

.caret,
.drop::before,
.more::before {
    content: "";
    width: 0;
    border: 3px solid transparent;
    border-top: 4px solid #111;
    border-bottom: 0;
}

.drop,
.more {
    display: flex;
    justify-content: center;
    align-items: center;
    width: 14px;
    height: 36px;
}

.more {
    align-items: flex-end;
    padding-bottom: 6px;
}

.sep {
    width: 7px;
    height: 39px;
    border-left: 1px solid #c2c2c2;
    box-shadow: inset 1px 0 #f3f3f3;
    margin-left: 3px;
    margin-right: -3px;
}

.grip {
    width: 14px;
    height: 39px;
    border-left: 1px solid #f0f0f0;
    background: radial-gradient(circle, #9b9b9b 1px, transparent 1px) 5px 6px / 4px 4px repeat-y;
}

.end {
    width: 4px;
    height: 41px;
    border-right: 1px solid #c6c6c6;
}

.curves {
    height: 44px;
    background: linear-gradient(#d8d8d8, #cbcbcb);
    border-bottom: 2px solid #a4a4a4;
}

.cut {
    width: 20px;
    justify-content: flex-end;
}

.cut svg {
    flex: none;
    margin-right: 4px;
}

.letter {
    font: bold 33px/36px "Liberation Serif", serif;
}

.selection {
    height: 40px;
    background: linear-gradient(#cdcdcd, #dcdcdc);
    border-top: 0;
    border-bottom: 1px solid #c4c4c4;
}

.selection .sep {
    width: 8px;
}

.selection .drop {
    margin-left: -2px;
}

.tool.on {
    background: #fff;
    border: 1px solid #666;
    border-radius: 3px;
}

.combo {
    position: relative;
    height: 20px;
}

.combo select {
    appearance: none;
    width: 100%;
    height: 20px;
    padding: 0 24px 0 3px;
    border: 1px solid #777;
    border-radius: 3px;
    background: #fff;
    color: #111;
    font: 15px/18px "Liberation Sans", "Noto Sans CJK SC", sans-serif;
}

.combo span {
    position: absolute;
    top: 1px;
    right: 1px;
    display: flex;
    align-items: center;
    justify-content: center;
    width: 19px;
    height: 18px;
    background: linear-gradient(#dcefff, #5f9bd6);
    border-left: 1px solid #6a8bad;
    pointer-events: none;
}

.combo span::before {
    content: "";
    border: 6px solid transparent;
    border-top: 8px solid #111;
    border-bottom: 0;
}

.filter {
    width: 138px;
    margin-left: -24px;
}

.scope {
    width: 142px;
    margin: 0 4px 0 11px;
}

/* 状态行 */
.status {
    display: grid;
    grid-template-columns: 717px 1fr 26px 28px;
    flex: none;
    height: 27px;
    border-bottom: 1px solid #8a8a8a;
}

.status p {
    border-right: 1px solid #c2c2c2;
    box-shadow: inset 1px 0 #efefef;
}

.status .message {
    padding-left: 3px;
    font: bold 14px/28px "Liberation Mono", "Noto Sans CJK SC", monospace;
    white-space: nowrap;
}

.message b {
    font-size: 16px;
}

main {
    display: grid;
    grid-template-columns: 1fr 41px 389px;
    flex: 1;
    min-height: 0;
}

/* 图形窗口 */
.viewport {
    position: relative;
    overflow: hidden;
    border: 2px solid #c4615c;
    border-left: 0;
    background: linear-gradient(#b5b7b9, #cfd0d1 40%, #e3e4e5 75%, #e6e7e9);
}

.part {
    position: absolute;
    left: 498px;
    top: 370px;
    width: 400px;
    height: 350px;
}

.part text {
    font: 17px "Liberation Sans", sans-serif;
}

.triad {
    position: absolute;
    left: 0;
    bottom: 64px;
    width: 64px;
    height: 60px;
}

.watermark {
    position: absolute;
    right: 5px;
    bottom: 49px;
    color: #e8e2c3;
    font: 83px/100px "Noto Sans CJK SC", sans-serif;
    -webkit-text-stroke: 3px #e8e2c3;
    white-space: nowrap;
}

.watermark span {
    margin-left: 20px;
}

.viewname {
    position: absolute;
    left: 0;
    bottom: 1px;
    color: #cc3a38;
    font-size: 16px;
}

/* 竖直工具条 */
.sidebar {
    background: #c8cbc8;
    border-left: 1px solid #f4e4e2;
}

.sidetools {
    display: flex;
    flex-direction: column;
    align-items: center;
    background: #dedede;
    border-right: 1px solid #f4f4f4;
    border-bottom: 1px solid #b5b5b5;
}

.sidetools .tool {
    height: 38px;
}

.sidetools .tool svg {
    width: 28px;
    height: 28px;
}

.hgrip {
    width: 28px;
    height: 11px;
    background: radial-gradient(circle, #9b9b9b 1px, transparent 1px) 0 4px / 4px 4px repeat-x;
}

.second {
    width: 100%;
    border-top: 1px solid #bbb;
    background-size: 5px 4px;
}

.less {
    align-self: flex-start;
    display: flex;
    align-items: center;
    width: 16px;
    height: 16px;
    padding-left: 6px;
}

.less::before,
.left::before {
    content: "";
    border: 4px solid transparent;
    border-right-color: #111;
    border-left: 0;
}

.hsep {
    width: 100%;
    height: 6px;
    border-bottom: 1px solid #bbb;
}

/* 导航器 */
.navigator {
    position: relative;
    display: flex;
    flex-direction: column;
    min-height: 0;
    padding: 0 8px 7px 12px;
    background: #ececed;
    border-left: 1px solid #c4c4c4;
    border-bottom: 2px solid #9a9a9a;
}

.navigator header {
    display: flex;
    flex: none;
    align-items: center;
    justify-content: space-between;
    height: 43px;
    padding: 7px 7px 0 6px;
}

.navigator h2 {
    font: bold 16px/20px "Noto Sans CJK SC", sans-serif;
    white-space: pre;
}

.navigator h2 i {
    font: bold 14px/20px "Liberation Mono", monospace;
}

.navigator header svg {
    display: block;
    width: 14px;
    height: 14px;
}

.tree {
    display: flex;
    flex-direction: column;
    flex: 1;
    min-height: 0;
    border: 2px solid #8c8c8c;
    background: #fff;
}

.rows {
    flex: 1;
    min-height: 0;
    overflow: hidden;
}

.tree table {
    width: 100%;
    height: 100%;
    table-layout: fixed;
    border-collapse: collapse;
}

.c-name {
    width: 282px;
}

.c-tool {
    width: 62px;
}

.tree th {
    height: 20px;
    padding: 0 0 0 7px;
    overflow: hidden;
    background: linear-gradient(#f3f3f3, #d5d5d5);
    border-right: 1px solid #bbb;
    border-bottom: 1px solid #999;
    font-size: 15px;
    font-weight: 400;
    line-height: 18px;
    text-align: left;
    white-space: nowrap;
}

.tree td {
    height: 24px;
    padding: 0;
    overflow: hidden;
    border-top: 1px solid #ececec;
    font: 12px/20px "Liberation Mono", monospace;
}

.tree td:first-child {
    border-right: 2px solid #222;
}

.tree td:nth-child(2) {
    padding-left: 4px;
    border-right: 1px solid #e6e6e6;
}

.tree tbody tr:nth-child(even) {
    background: #f5f5f5;
}

.node {
    position: relative;
    display: flex;
    align-items: center;
    height: 23px;
}

.node svg {
    flex: none;
    width: 18px;
    height: 18px;
    margin-right: 4px;
}

.node b {
    font: 15px/20px "Noto Sans CJK SC", sans-serif;
}

.root {
    padding-left: 4px;
}

.first {
    padding-left: 25px;
}

.second.node {
    width: auto;
    padding-left: 5px;
    border-top: 0;
    background: none;
}

.third {
    padding-left: 29px;
}

/* 树的连接线 */
.first::before,
.third::before {
    content: "";
    position: absolute;
    left: 11px;
    top: 12px;
    width: 10px;
    height: 12px;
    border: dotted #aaa;
    border-width: 1px 0 0 1px;
}

.third::before {
    top: 0;
    border-width: 0 0 1px 1px;
}

.plus {
    width: 12px;
    height: 12px;
    margin-right: 12px;
    border: 1px solid #777;
    border-radius: 2px;
    background: #fff;
    line-height: 10px;
}

.alert {
    flex: none;
    width: 10px;
    height: 20px;
    margin-right: 5px;
    background: radial-gradient(ellipse 5px 8px at 5px 7px, #f6dd2a 80%, transparent), radial-gradient(circle at 5px 18px, #e3b71c 2px, transparent 3px);
}

.tree .selected td:nth-child(n+2) {
    background: #2494ff;
    color: #fff;
    font-size: 14px;
}

.tree .selected td:last-child {
    padding-left: 6px;
    color: #189a3a;
}

.third svg {
    width: 20px;
    height: 20px;
    margin-right: 0;
}

.third span {
    flex: 1;
    height: 24px;
    padding-left: 2px;
    background: #2494ff;
    color: #fff;
    outline: 1px dotted #24507c;
    line-height: 24px;
}

.scroll {
    display: flex;
    flex: none;
    height: 22px;
    padding: 2px 4px;
    background: #efefef;
}

.scroll button {
    display: flex;
    align-items: center;
    justify-content: center;
    width: 19px;
}

.right {
    margin-left: auto;
}

.right::before {
    content: "";
    border: 4px solid transparent;
    border-left-color: #333;
    border-right: 0;
}

.thumb {
    display: flex;
    align-items: center;
    justify-content: center;
    gap: 2px;
    width: 127px;
    border: 1px solid #999;
    background: linear-gradient(#f0f0f0, #c4c4c4);
}

.thumb i {
    width: 2px;
    height: 8px;
    background: #888;
}

.splitter {
    display: flex;
    flex: none;
    justify-content: center;
    height: 14px;
    margin-top: 1px;
    background: linear-gradient(#b8b8b8, #b8b8b8) 0 6px / 100% 1px no-repeat;
}

.splitter span {
    width: 82px;
    height: 14px;
    border: solid #ececed;
    border-width: 5px 8px 3px;
    background: #cfcfcf;
    box-shadow: inset -1px -1px #aaa;
}

.fold {
    display: flex;
    flex: none;
    justify-content: space-between;
    height: 28px;
    padding-left: 8px;
    border-right: 1px solid #aaa;
    border-bottom: 1px solid #9c9ea2;
    background: linear-gradient(#fafafc, #f2f3f5 50%, #dcdde0);
    font: bold 16px/27px "Noto Sans CJK SC", sans-serif;
}

.fold i {
    display: flex;
    align-items: center;
    justify-content: center;
    width: 29px;
    height: 27px;
    border-left: 1px solid #b5b6ba;
}

.fold i::before {
    content: "";
    width: 9px;
    height: 9px;
    margin-top: -5px;
    border: solid #666;
    border-width: 0 3px 3px 0;
    transform: rotate(45deg);
}

/* 右键菜单 */
.context {
    position: absolute;
    left: 78px;
    top: 153px;
    display: flex;
    flex-direction: column;
    width: 119px;
    height: 486px;
    padding: 2px 3px;
    list-style: none;
    background: #f1f1f3;
    border: 1px solid #a9abae;
    box-shadow: 1px 1px 1px #bbb;
}

.context li {
    display: flex;
    flex: 2 1 0;
    min-height: 0;
}

.context .line {
    flex-grow: 1;
    align-items: center;
}

.line::before {
    content: "";
    width: 100%;
    border-top: 1px solid #8c8c8c;
}

.context button {
    display: flex;
    align-items: center;
    width: 100%;
    padding-left: 2px;
    line-height: 20px;
    white-space: nowrap;
}

.context button svg {
    flex: none;
    width: 20px;
    height: 20px;
    margin-right: 6px;
}

.context .default {
    font-weight: 700;
}

.context .hot {
    color: #1c2a86;
}

.context .sub {
    padding-left: 28px;
}

.sub::after {
    content: "";
    margin: 0 8px 4px auto;
    border: 5px solid transparent;
    border-left-color: #111;
    border-right: 0;
}

.spot {
    position: absolute;
    z-index: 1;
    left: 79px;
    top: 363px;
    width: 72px;
    height: 72px;
    border-radius: 50%;
    background: #fff200;
    mix-blend-mode: multiply;
}

.cursor {
    position: absolute;
    z-index: 2;
    left: 115px;
    top: 398px;
    width: 16px;
    height: 24px;
}

/* 底部工具条 */
.views {
    height: 41px;
    background: linear-gradient(#e4e4e4, #dadada);
}

.views .drop {
    width: 15px;
}

.extra {
    align-items: flex-start;
    height: 10px;
    padding: 2px 0 0 32px;
    background: #d9d9d9;
}

.extra .tool {
    width: 42px;
}
```
